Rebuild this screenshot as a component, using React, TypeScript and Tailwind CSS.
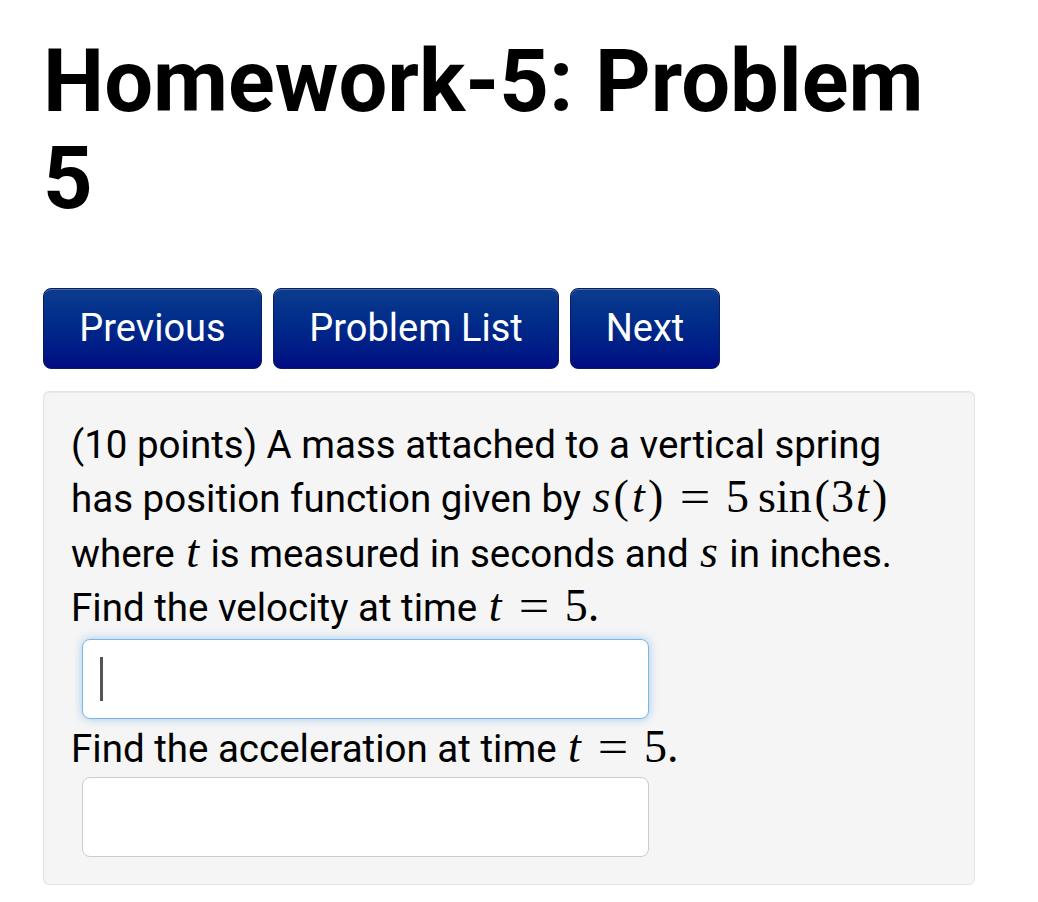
import React from "react";

function Eq() {
  return (
    <span className="inline-block w-[1.334em] text-center">
      <span className="inline-block scale-x-[1.18]">=</span>
    </span>
  );
}

function Cursor() {
  return <span className="block h-[44px] w-[3px] bg-[#555]" />;
}

export default function App() {
  return (
    <div className="min-h-[902px] bg-white pl-[43px] pt-[34px] font-['Roboto',sans-serif] text-black">
      <h1 className="text-[86.6px] font-bold leading-[96.8px] whitespace-nowrap">
        Homework-5: Problem
        <br />5
      </h1>

      <div className="mt-[60px] flex gap-[11px]">
        {["Previous", "Problem List", "Next"].map((label, i) => (
          <button
            key={label}
            className={
              (i === 0 ? "w-[219px] " : i === 1 ? "w-[286px] " : "w-[150px] ") +
              "flex h-[81px] items-center justify-center rounded-[8px] border border-[#0a1d5e] bg-linear-to-b from-[#0d3c8e] to-[#000a83] text-[38px] text-white shadow-[inset_0_1px_0_rgba(255,255,255,0.25)]"
            }
          >
            {label}
          </button>
        ))}
      </div>

      <div className="mt-[22px] w-[932px] rounded-[6px] border border-[#e3e3e3] bg-[#f5f5f5] px-[27px] pt-[26px] pb-[27px] text-[38.5px] leading-[54.5px] shadow-[inset_0_1px_1px_rgba(0,0,0,0.05)]">
        <div className="whitespace-nowrap">(10 points) A mass attached to a vertical spring</div>
        <div className="whitespace-nowrap">
          has position function given by{" "}
          <span className="font-['Liberation_Serif',serif] text-[46px] leading-none">
            <i className="inline-block w-[0.469em] text-center">s</i>
            <span className="inline-block w-[0.389em] text-center">(</span>
            <i className="inline-block w-[0.361em] text-center">t</i>
            <span className="inline-block w-[0.389em] text-center">)</span>
            <Eq />
            <span className="inline-block w-[0.5em] text-center mr-[0.167em]">5</span>
            <span className="inline-block w-[1.228em] text-center">sin</span>
            <span className="inline-block w-[0.389em] text-center">(</span>
            <span className="inline-block w-[0.5em] text-center">3</span>
            <i className="inline-block w-[0.361em] text-center">t</i>
            <span className="inline-block w-[0.389em] text-center">)</span>
          </span>
        </div>
        <div className="whitespace-nowrap">
          where{" "}
          <span className="font-['Liberation_Serif',serif] text-[46px] leading-none">
            <i className="inline-block w-[0.361em] text-center">t</i>
          </span>{" "}
          is measured in seconds and{" "}
          <span className="font-['Liberation_Serif',serif] text-[46px] leading-none">
            <i className="inline-block w-[0.469em] text-center">s</i>
          </span>{" "}
          in inches.
        </div>
        <div className="whitespace-nowrap">
          Find the velocity at time{" "}
          <span className="font-['Liberation_Serif',serif] text-[46px] leading-none">
            <i className="inline-block w-[0.361em] text-center">t</i>
            <Eq />
            <span className="inline-block w-[0.5em] text-center">5</span>
            <span className="inline-block w-[0.278em] text-left">.</span>
          </span>
        </div>
        <div className="mt-[3px] ml-[11px] flex h-[80px] w-[567px] items-center rounded-[8px] border border-[#7ab6ea] bg-white pl-[17px] shadow-[0_0_10px_rgba(102,175,233,0.6)]">
          <Cursor />
        </div>
        <div className="mt-[3px] whitespace-nowrap">
          Find the acceleration at time{" "}
          <span className="font-['Liberation_Serif',serif] text-[46px] leading-none">
            <i className="inline-block w-[0.361em] text-center">t</i>
            <Eq />
            <span className="inline-block w-[0.5em] text-center">5</span>
            <span className="inline-block w-[0.278em] text-left">.</span>
          </span>
        </div>
        <div className="mt-[1px] ml-[11px] h-[80px] w-[567px] rounded-[8px] border border-[#cccccc] bg-white" />
      </div>
    </div>
  );
}
